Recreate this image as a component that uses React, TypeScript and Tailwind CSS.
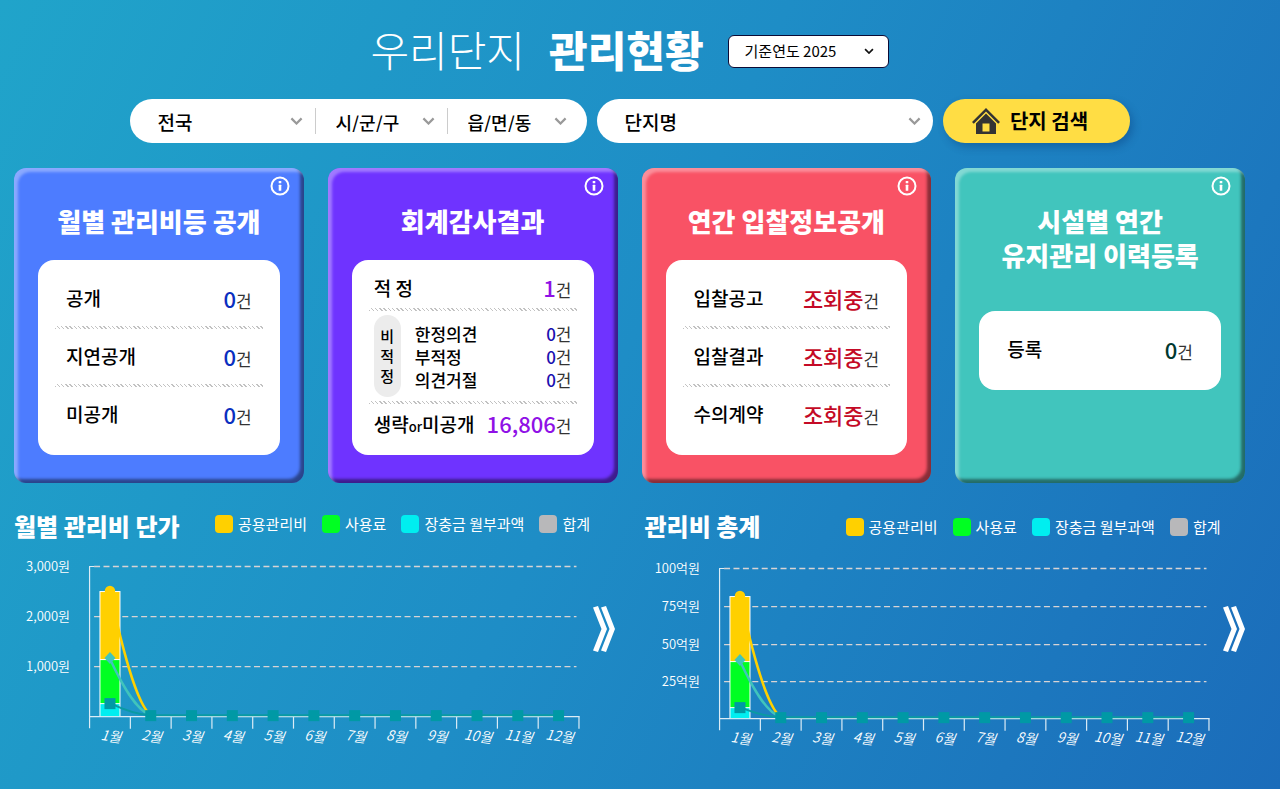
import type { ReactNode } from "react";

function Chevron({ className }: { className: string }) {
  return (
    <svg viewBox="0 0 14 9" fill="none" strokeWidth="2.4" aria-hidden="true" className={className}>
      <path d="M1.5 1.5 7 7l5.500-5.500" stroke="currentColor" />
    </svg>
  );
}

function Picker({ label, text, className }: { label: string; text: string; className: string }) {
  return (
    <div className={`relative flex h-[26px] items-center ${className}`}>
      <select
        aria-label={label}
        className="h-full w-full appearance-none bg-transparent pb-0.5 font-medium text-black outline-none"
      >
        <option>{text}</option>
      </select>
      <Chevron className="pointer-events-none absolute right-3 w-[13px] text-[#999999]" />
    </div>
  );
}

function InfoIcon() {
  return (
    <svg viewBox="0 0 20 20" fill="none" aria-hidden="true" className="size-5">
      <circle cx="10" cy="10" r="8.500" stroke="white" strokeWidth="2" />
      <rect x="8.700" y="5" width="2.600" height="2.300" rx="0.500" fill="white" />
      <rect x="8.700" y="8.700" width="2.600" height="6" rx="0.500" fill="white" />
    </svg>
  );
}

function Card({ title, color, children }: { title: ReactNode; color: string; children: ReactNode }) {
  return (
    <section
      className={`relative flex min-h-[315px] flex-col rounded-xl px-6 pb-7 pt-9 shadow-[inset_4px_4px_3px_rgba(255,255,255,0.35),inset_-4px_-4px_3px_rgba(0,0,0,0.45)] ${color}`}
    >
      <button type="button" aria-label="안내" className="absolute right-3.5 top-2">
        <InfoIcon />
      </button>
      <h2 className="min-h-14 text-center text-[26px] font-black leading-[34px] text-white">{title}</h2>
      {children}
    </section>
  );
}

function Hatch() {
  return (
    <div className="h-[3px] bg-[repeating-linear-gradient(45deg,#c2c2c2_0_1px,transparent_1px_3px)]" />
  );
}

function Row({ label, value, color }: { label: string; value: string; color: string }) {
  return (
    <div className="flex h-[55px] items-center justify-between px-[11px] pb-0.5 leading-none">
      <span className="text-[19px] font-medium text-black">{label}</span>
      <span className="flex items-baseline">
        <b className={`text-[22px] font-medium ${color}`}>{value}</b>
        <span className="text-[17px] text-[#333333]">건</span>
      </span>
    </div>
  );
}

function Rows({ rows, color }: { rows: [string, string][]; color: string }) {
  return (
    <div className="rounded-2xl bg-white px-[17px] pb-[13px] pt-[11px]">
      {rows.map(([label, value], i) => (
        <div key={label}>
          {i > 0 && <Hatch />}
          <Row label={label} value={value} color={color} />
        </div>
      ))}
    </div>
  );
}

function AuditPanel() {
  return (
    <div className="flex h-[195px] flex-col rounded-2xl bg-white px-[17px] pt-2 leading-none text-black">
      <div className="flex h-10 items-center justify-between px-[5px] pb-0.5">
        <span className="text-[19px] font-medium">적 정</span>
        <span className="flex items-baseline">
          <b className="text-[22px] font-medium text-[#8f11e6]">1</b>
          <span className="text-[17px] text-[#333333]">건</span>
        </span>
      </div>
      <Hatch />
      <div className="flex h-[90px] items-center px-[5px]">
        <div className="flex h-[82px] w-[27px] flex-col items-center justify-center rounded-full bg-[#ececec] text-[15px] font-medium leading-5">
          <span>비</span>
          <span>적</span>
          <span>정</span>
        </div>
        <div className="flex flex-1 flex-col pl-3.5">
          {["한정의견", "부적정", "의견거절"].map((name) => (
            <div key={name} className="flex h-[23px] items-center justify-between">
              <span className="text-[17px] font-medium">{name}</span>
              <span className="flex items-baseline">
                <b className="text-[17px] font-medium text-[#1a0fb0]">0</b>
                <span className="text-[17px] text-[#333333]">건</span>
              </span>
            </div>
          ))}
        </div>
      </div>
      <Hatch />
      <div className="flex h-10 items-center justify-between whitespace-nowrap px-[5px] pb-0.5">
        <span className="flex items-baseline text-[19px] font-medium">
          생략<span className="text-[13px]">or</span>미공개
        </span>
        <span className="flex items-baseline">
          <b className="text-[22px] font-medium text-[#8f11e6]">16,806</b>
          <span className="text-[17px] text-[#333333]">건</span>
        </span>
      </div>
    </div>
  );
}

const legend = [
  { name: "공용관리비", color: "bg-[#ffd000]" },
  { name: "사용료", color: "bg-[#00ff22]" },
  { name: "장충금 월부과액", color: "bg-[#00eef0]" },
  { name: "합계", color: "bg-[#b8b8ba]" },
];

type ChartProps = {
  title: string;
  ticks: { label: string; y: number }[];
  base: number;
  left: number;
  bar: { yellow: number; green: number; cyan: number };
  legendClass: string;
};

function Chart({ title, ticks, base, left, bar, legendClass }: ChartProps) {
  const right = left + 489;
  const step = (right - left) / 12;
  const px = (i: number) => left + step * (i + 0.5) + 0.5;
  const x0 = px(0);
  const x1 = px(1);
  const top = ticks[0].y;
  const curve = (y: number) =>
    `M${x0} ${y}C${x0 + 12} ${y + (base - y) * 0.45} ${x0 + 26} ${base - (base - y) * 0.1} ${x1} ${base - 1}`;
  return (
    <section>
      <div className="flex h-[49px] items-start">
        <h2 className="w-[201px] pt-2 text-2xl font-black leading-[34px] text-white">{title}</h2>
        <ul className={`flex gap-[15px] text-[15px] leading-5 text-white ${legendClass}`}>
          {legend.map((item) => (
            <li key={item.name} className="flex items-center gap-[5px] whitespace-nowrap">
              <span className={`size-[18px] rounded ${item.color}`} />
              {item.name}
            </li>
          ))}
        </ul>
      </div>
      <div className="flex items-start">
        <svg viewBox="0 0 578 210" className="min-w-0 flex-1" role="img" aria-label={title}>
          {ticks.map((t) => (
            <g key={t.label}>
              <line x1={left + 5} x2={right - 2} y1={t.y + 0.5} y2={t.y + 0.5} stroke="#d9d4d4" strokeWidth="1.3" strokeDasharray="6 3.4" />
              <text x={left - 19} y={t.y + 5} textAnchor="end" fontSize="13" fontWeight="350" fill="white">
                {t.label}
              </text>
            </g>
          ))}
          <path d={`M${left + 5} ${top + 0.5}H${left + 0.5}V${base + 12}M${left} ${base + 0.5}H${right + 1}`} stroke="#dcecf6" strokeWidth="1.2" fill="none" />
          {Array.from({ length: 12 }, (_, i) => (
            <g key={i}>
              <line x1={left + step * (i + 1) + 0.5} x2={left + step * (i + 1) + 0.5} y1={base} y2={base + 12.5} stroke="#dcecf6" strokeWidth="1.2" />
              <text
                x={px(i) + 1}
                y={base + 25}
                textAnchor="middle"
                fontSize="14"
                fontWeight="350"
                fontStyle="italic"
                fill="white"
                transform={`rotate(8 ${px(i)} ${base + 21})`}
              >
                {i + 1}월
              </text>
            </g>
          ))}
          <rect x={x0 - 10.5} y={bar.yellow} width="21" height={base - bar.yellow} fill="white" />
          <rect x={x0 - 9.5} y={bar.yellow + 1} width="19" height={bar.green - bar.yellow - 1} fill="#ffd000" />
          <rect x={x0 - 9.5} y={bar.green + 1} width="19" height={bar.cyan - bar.green - 1} fill="#00ff22" />
          <rect x={x0 - 9.5} y={bar.cyan + 1} width="19" height={base - bar.cyan - 1} fill="#00eef0" />
          <path d={curve(bar.yellow)} stroke="#ffd000" strokeWidth="2.4" fill="none" />
          <path d={curve(bar.green)} stroke="#40c4bc" strokeWidth="2.4" fill="none" />
          <path d={`${curve(bar.cyan)}H${px(11)}`} stroke="#0a9aa3" strokeWidth="2" fill="none" />
          <circle cx={x0} cy={bar.yellow} r="5.2" fill="#ffd000" />
          <path d={`M${x0} ${bar.green - 7}l5.5 6-5.5 6-5.5-6z`} fill="#40c4bc" />
          <rect x={x0 - 5.5} y={bar.cyan - 5} width="11" height="11" fill="#0099a5" />
          {Array.from({ length: 11 }, (_, i) => (
            <rect key={i} x={px(i + 1) - 5.5} y={base - 6} width="11" height="11" fill="#0099a5" />
          ))}
        </svg>
        <button type="button" aria-label="다음" className="mt-14 shrink-0">
          <svg viewBox="0 0 22 46" className="h-[46px] w-[22px]" fill="white" aria-hidden="true">
            <path d="M0 1.500 5 0 14 23 5 46 0 44.500 8.500 23z" />
            <path d="M8 1.500 13 0 22 23 13 46 8 44.500 16.500 23z" />
          </svg>
        </button>
      </div>
    </section>
  );
}

export default function App() {
  return (
    <main className="min-h-screen bg-[linear-gradient(115deg,#20a4ca_0%,#1e8dc6_48%,#1b6cba_100%)] pb-2 pl-3.5 pr-[35px] pt-[23px] font-['Noto_Sans_CJK_KR',sans-serif]">
      <header className="flex items-center justify-center">
        <h1 className="flex gap-6 whitespace-nowrap pb-1 text-[42px] leading-[52px] text-white">
          <span className="font-light">우리단지</span>
          <span className="font-black">관리현황</span>
        </h1>
        <div className="relative ml-6 flex h-[33px] w-[161px] items-center rounded-md border border-[#0b0b35] bg-white">
          <select aria-label="기준연도" className="h-full w-full appearance-none bg-transparent pl-4 text-[15px] text-black outline-none">
            <option>기준연도 2025</option>
          </select>
          <Chevron className="pointer-events-none absolute right-3.5 w-2.5 text-[#111111]" />
        </div>
      </header>

      <form className="mt-5 flex justify-center gap-2.5" onSubmit={(e) => e.preventDefault()}>
        <div className="flex h-11 w-[457px] items-center rounded-full bg-white">
          <Picker label="시도" text="전국" className="w-[185px] pl-7 text-[19px]" />
          <Picker label="시군구" text="시/군/구" className="w-[132px] border-l border-[#cccccc] pl-5 text-lg" />
          <Picker label="읍면동" text="읍/면/동" className="w-[132px] border-l border-[#cccccc] pl-5 text-lg" />
        </div>
        <div className="flex h-11 w-[336px] items-center rounded-full bg-white">
          <Picker label="단지명" text="단지명" className="w-full pl-7 text-[19px]" />
        </div>
        <button
          type="submit"
          className="flex h-11 w-[187px] items-center justify-center gap-2.5 rounded-full bg-[#ffdd44] pr-3 text-xl font-bold text-black shadow-[3px_4px_8px_rgba(0,40,100,0.3)]"
        >
          <svg viewBox="0 0 28 27" className="h-[27px] w-7" fill="#333333" aria-hidden="true">
            <path d="M14 0 28 14l-1.800 1.800L14 3.600 1.800 15.800 0 14z" />
            <path fillRule="evenodd" d="M14 5.500 24 15.500V26H4V15.500zM10.500 15.500v8h7v-8z" />
          </svg>
          단지 검색
        </button>
      </form>

      <div className="mt-[25px] grid grid-cols-4 gap-6">
        <Card title="월별 관리비등 공개" color="bg-[#4d7cff]">
          <Rows color="text-[#0a2fc0]" rows={[["공개", "0"], ["지연공개", "0"], ["미공개", "0"]]} />
        </Card>
        <Card title="회계감사결과" color="bg-[#6f33ff]">
          <AuditPanel />
        </Card>
        <Card title="연간 입찰정보공개" color="bg-[#f95265]">
          <Rows
            color="text-[#c40a26]"
            rows={[["입찰공고", "조회중"], ["입찰결과", "조회중"], ["수의계약", "조회중"]]}
          />
        </Card>
        <Card
          title={
            <>
              시설별 연간
              <br />
              유지관리 이력등록
            </>
          }
          color="bg-[#41c5bd]"
        >
          <div className="mt-[39px]">
            <Rows color="text-[#00382f]" rows={[["등록", "0"]]} />
          </div>
        </Card>
      </div>

      <div className="mt-[18px] grid grid-cols-2 gap-[30px]">
        <Chart
          title="월별 관리비 단가"
          ticks={[
            { label: "3,000원", y: 16 },
            { label: "2,000원", y: 66 },
            { label: "1,000원", y: 116 },
          ]}
          base={166}
          left={75}
          bar={{ yellow: 41, green: 109, cyan: 153 }}
          legendClass="pt-[13px]"
        />
        <Chart
          title="관리비 총계"
          ticks={[
            { label: "100억원", y: 18 },
            { label: "75억원", y: 56 },
            { label: "50억원", y: 94 },
            { label: "25억원", y: 131 },
          ]}
          base={168}
          left={74}
          bar={{ yellow: 46, green: 111, cyan: 157 }}
          legendClass="pt-4"
        />
      </div>
    </main>
  );
}
